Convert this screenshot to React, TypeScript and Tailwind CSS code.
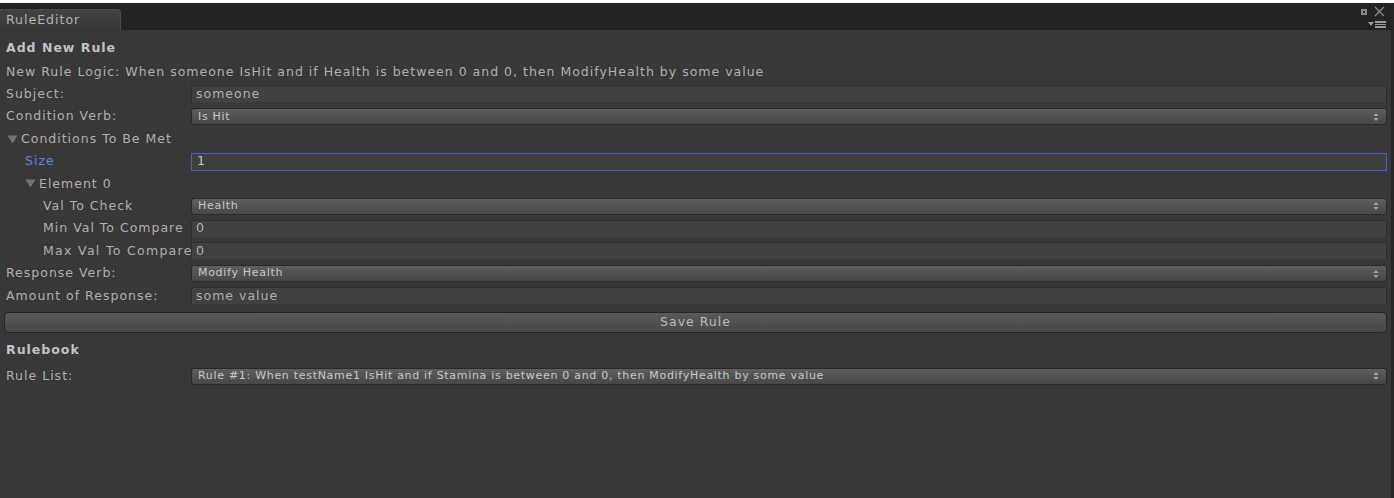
import React from 'react';

const font = { fontFamily: '"DejaVu Sans", Verdana, sans-serif' };

const Arrows = () => (
  <svg width="6" height="10" viewBox="0 0 6 10" className="shrink-0">
    <path d="M3 1 L5.5 4 L0.5 4 Z" fill="#a8a8a8" />
    <path d="M3 9 L5.5 6 L0.5 6 Z" fill="#a8a8a8" />
  </svg>
);

const Triangle = () => (
  <svg width="11" height="9" viewBox="0 0 11 9" className="shrink-0 mr-[3px]">
    <path d="M0.5 0.5 L10.5 0.5 L5.5 8.5 Z" fill="#747474" />
  </svg>
);

const TextField = ({ value, focused }: { value: string; focused?: boolean }) => (
  <div
    className={
      focused
        ? 'flex-1 h-[18px] flex items-center px-[5px] bg-[#3f3f3f] border border-[#4a5bd0] text-[12.5px] text-[#c4c4c4]'
        : 'flex-1 h-[18px] flex items-center px-[4px] bg-[#414141] border border-[#2e2e2e] border-b-[#3a3a3a] text-[12.5px] text-[#b0b0b0]'
    }
  >
    {value}
  </div>
);

const Dropdown = ({ value }: { value: string }) => (
  <div className="flex-1 h-[17px] flex items-center justify-between pl-[6px] pr-[7px] rounded-[3px] border border-[#2a2a2a] bg-gradient-to-b from-[#5e5e5e] to-[#474747] text-[11px] tracking-[0.7px] text-[#c8c8c8]">
    <span className="truncate">{value}</span>
    <Arrows />
  </div>
);

const Row = ({
  label,
  indent = 0,
  blue,
  children,
}: {
  label: React.ReactNode;
  indent?: number;
  blue?: boolean;
  children?: React.ReactNode;
}) => (
  <div className="flex items-center h-[22.4px]">
    <div
      className={
        (blue ? 'text-[#5f80e0] ' : 'text-[#b0b0b0] ') +
        'w-[185px] shrink-0 overflow-hidden whitespace-nowrap text-[12.5px] flex items-center'
      }
      style={{ paddingLeft: indent }}
    >
      {label}
    </div>
    {children}
  </div>
);

export default function App() {
  return (
    <div className="w-[1394px] h-[498px] bg-white flex flex-col overflow-hidden tracking-[1px]" style={font}>
      <div className="h-[3px] bg-white" />
      <div className="flex-1 flex flex-col border-r-[3px] border-[#262626] bg-[#383838]">
        {/* tab bar */}
        <div className="relative h-[27px] bg-[#232323] flex items-end">
          <div className="w-[121px] h-[21px] bg-gradient-to-b from-[#424242] to-[#383838] rounded-tr-[4px] border-t border-r border-[#4a4a4a] flex items-center pl-[6px] text-[12.5px] text-[#b4b4b4]">
            RuleEditor
          </div>
          <div className="absolute right-[6px] top-[3px] flex items-center gap-[7px]">
            <div className="w-[6px] h-[6px] border-[2px] border-[#8a8a8a]" />
            <svg width="11" height="11" viewBox="0 0 11 11">
              <path d="M1 1 L10 10 M10 1 L1 10" stroke="#8a8a8a" strokeWidth="1.3" />
            </svg>
          </div>
          <div className="absolute right-[5px] top-[18px] flex items-center gap-[1px]">
            <svg width="6" height="4" viewBox="0 0 6 4">
              <path d="M0 0 L6 0 L3 4 Z" fill="#9a9a9a" />
            </svg>
            <div className="flex flex-col gap-[1px]">
              <div className="w-[11px] h-[1.5px] bg-[#9a9a9a]" />
              <div className="w-[11px] h-[1.5px] bg-[#9a9a9a]" />
              <div className="w-[11px] h-[1.5px] bg-[#9a9a9a]" />
            </div>
          </div>
        </div>

        {/* content */}
        <div className="flex flex-col pl-[6px] pr-[4px]">
          <div className="h-[24.8px] mt-[6px] flex items-center font-bold text-[12.5px] text-[#c2c2c2]">
            Add New Rule
          </div>
          <div className="h-[22.4px] flex items-center text-[12.5px] text-[#b0b0b0] whitespace-nowrap">
            New Rule Logic: When someone IsHit and if Health is between 0 and 0, then ModifyHealth by some value
          </div>
          <Row label="Subject:">
            <TextField value="someone" />
          </Row>
          <Row label="Condition Verb:">
            <Dropdown value="Is Hit" />
          </Row>
          <Row
            label={
              <>
                <Triangle />
                Conditions To Be Met
              </>
            }
            indent={1}
          />
          <Row label="Size" indent={19} blue>
            <TextField value="1" focused />
          </Row>
          <Row
            label={
              <>
                <Triangle />
                Element 0
              </>
            }
            indent={19}
          />
          <Row label="Val To Check" indent={37}>
            <Dropdown value="Health" />
          </Row>
          <Row label="Min Val To Compare" indent={37}>
            <TextField value="0" />
          </Row>
          <Row label={<span className="tracking-[1.3px]">Max Val To Compare</span>} indent={37}>
            <TextField value="0" />
          </Row>
          <Row label="Response Verb:">
            <Dropdown value="Modify Health" />
          </Row>
          <Row label="Amount of Response:">
            <TextField value="some value" />
          </Row>
          <button className="mt-[4.8px] -ml-[2px] h-[21px] rounded-[4px] border border-[#262626] bg-gradient-to-b from-[#5a5a5a] to-[#474747] text-[12.5px] text-[#bcbcbc] flex items-center justify-center">
            Save Rule
          </button>
          <div className="h-[25px] mt-[5px] flex items-center font-bold text-[12.5px] text-[#c2c2c2]">
            Rulebook
          </div>
          <div className="mt-[2px]">
            <Row label="Rule List:">
              <Dropdown value="Rule #1: When testName1 IsHit and if Stamina is between 0 and 0, then ModifyHealth by some value" />
            </Row>
          </div>
        </div>
      </div>
    </div>
  );
}
